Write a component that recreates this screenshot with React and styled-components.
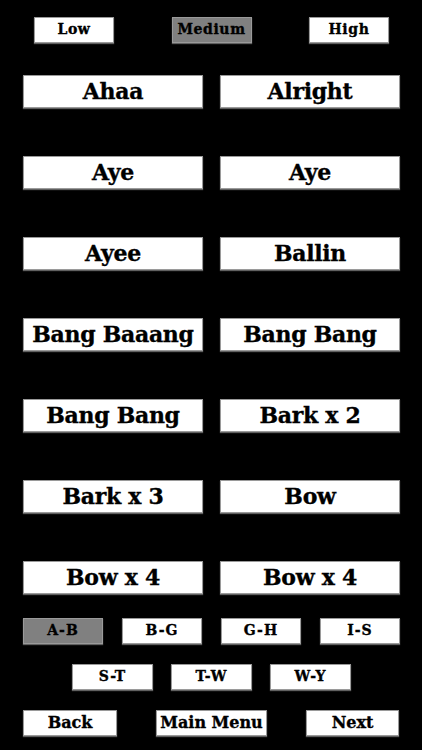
import React from "react";
import styled, { createGlobalStyle } from "styled-components";

const GlobalStyle = createGlobalStyle`
  html, body {
    margin: 0;
    padding: 0;
    background: #000;
  }
  * { box-sizing: border-box; }
`;

const Screen = styled.div`
  width: 422px;
  height: 750px;
  background: #000;
  padding-top: 17px;
  font-family: "DejaVu Serif", "Liberation Serif", serif;
  display: flex;
  flex-direction: column;
`;

const Button = styled.button`
  font-family: inherit;
  font-weight: bold;
  color: #000;
  background: ${(p) => (p.$active ? "#808080" : "#fff")};
  border: 1px solid #9a9a9a;
  box-shadow: 0 1px 1px rgba(160, 160, 160, 0.6);
  padding: 0 0 2px;
  margin: 0;
  display: flex;
  align-items: center;
  justify-content: center;
  white-space: nowrap;
  cursor: pointer;
  width: ${(p) => p.$w || 80}px;
  height: ${(p) => p.$h || 26}px;
  font-size: ${(p) => p.$size || 14}px;
  letter-spacing: ${(p) => p.$spacing || 0}px;
  -webkit-text-stroke: 0.35px #000;
`;

const LevelRow = styled.div`
  display: flex;
  justify-content: space-between;
  padding: 0 33px 0 34px;
`;

const SoundGrid = styled.div`
  display: grid;
  grid-template-columns: 180px 180px;
  column-gap: 17px;
  row-gap: 48px;
  padding-left: 23px;
  margin-top: 32px;
`;

const FilterRow = styled.div`
  display: flex;
  gap: ${(p) => p.$gap}px;
  padding-left: ${(p) => p.$left}px;
  margin-top: ${(p) => p.$top}px;
`;

const NavRow = styled.div`
  display: flex;
  justify-content: space-between;
  padding: 0 23px;
  margin-top: 20px;
`;

const levels = [
  { label: "Low" },
  { label: "Medium", active: true },
  { label: "High" },
];

const sounds = [
  "Ahaa", "Alright",
  "Aye", "Aye",
  "Ayee", "Ballin",
  "Bang Baaang", "Bang Bang",
  "Bang Bang", "Bark x 2",
  "Bark x 3", "Bow",
  "Bow x 4", "Bow x 4",
];

const filtersTop = [
  { label: "A-B", active: true },
  { label: "B-G" },
  { label: "G-H" },
  { label: "I-S" },
];

const filtersBottom = ["S-T", "T-W", "W-Y"];

export default function App() {
  return (
    <>
      <GlobalStyle />
      <Screen>
        <LevelRow>
          {levels.map((l) => (
            <Button key={l.label} $active={l.active} $size={14} $spacing={0.6}>
              {l.label}
            </Button>
          ))}
        </LevelRow>

        <SoundGrid>
          {sounds.map((s, i) => (
            <Button key={i} $w={180} $h={33} $size={22} $spacing={-0.3}>
              {s}
            </Button>
          ))}
        </SoundGrid>

        <FilterRow $gap={19} $left={23} $top={24}>
          {filtersTop.map((f) => (
            <Button key={f.label} $active={f.active} $w={80} $size={14} $spacing={1}>
              {f.label}
            </Button>
          ))}
        </FilterRow>

        <FilterRow $gap={18} $left={72} $top={20}>
          {filtersBottom.map((f) => (
            <Button key={f} $w={81} $size={14} $spacing={1}>
              {f}
            </Button>
          ))}
        </FilterRow>

        <NavRow>
          <Button $w={94} $size={16}>Back</Button>
          <Button $w={111} $size={16}>Main Menu</Button>
          <Button $w={93} $size={16}>Next</Button>
        </NavRow>
      </Screen>
    </>
  );
}
